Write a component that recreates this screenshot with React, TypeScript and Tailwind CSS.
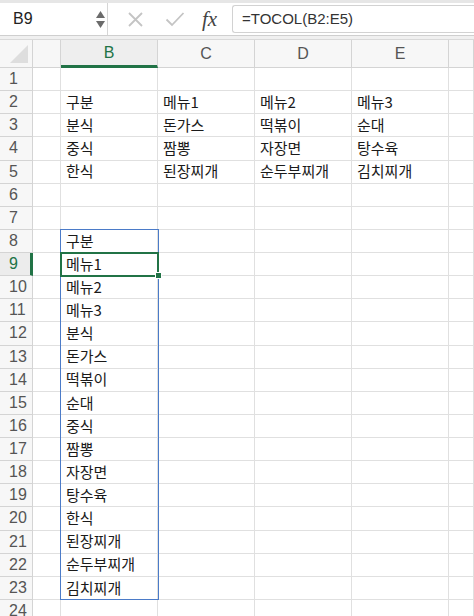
import React from "react";

const cols = ["A", "B", "C", "D", "E", "F"];
const colW = ["28px", "97px", "97px", "97px", "97px", "1fr"];

const data: Record<number, string[]> = {
  2: ["구분", "메뉴1", "메뉴2", "메뉴3"],
  3: ["분식", "돈가스", "떡볶이", "순대"],
  4: ["중식", "짬뽕", "자장면", "탕수육"],
  5: ["한식", "된장찌개", "순두부찌개", "김치찌개"],
};
const list = [
  "구분", "메뉴1", "메뉴2", "메뉴3", "분식", "돈가스", "떡볶이", "순대",
  "중식", "짬뽕", "자장면", "탕수육", "한식", "된장찌개", "순두부찌개", "김치찌개",
];

function cellText(r: number, c: number): string {
  if (data[r] && c >= 1 && c <= 4) return data[r][c - 1];
  if (r >= 8 && r <= 23 && c === 1) return list[r - 8];
  return "";
}

const ROW_H = 23.13;

export default function App() {
  const rows = Array.from({ length: 24 }, (_, i) => i + 1);
  return (
    <div className="w-[474px] h-[616px] overflow-hidden bg-white" style={{ fontFamily: '"Noto Sans CJK KR", "Noto Sans", sans-serif' }}>
      {/* top strip */}
      <div className="h-[3px] bg-[#e6e6e6]" />
      {/* toolbar */}
      <div className="h-[33px] flex items-stretch bg-white border-b border-[#cfcfcf]">
        <div className="w-[108px] flex items-center border-r border-[#d6d6d6] pl-[13px] pr-[2px]">
          <span className="flex-1 text-[16px] text-[#222]" style={{ fontFamily: '"Liberation Sans", Arial, sans-serif' }}>B9</span>
          <div className="flex flex-col items-center justify-center gap-[3px] w-[10px]">
            <svg width="9" height="7" viewBox="0 0 9 7"><path d="M4.5 0 L9 7 L0 7 Z" fill="#6b6b6b" /></svg>
            <svg width="9" height="7" viewBox="0 0 9 7"><path d="M0 0 L9 0 L4.5 7 Z" fill="#6b6b6b" /></svg>
          </div>
        </div>
        <div className="w-[124px] flex items-center pl-[19px]">
          <svg width="17" height="17" viewBox="0 0 17 17" className="mr-[21px]">
            <path d="M2 2 L15 15 M15 2 L2 15" stroke="#c4c4c4" strokeWidth="1.8" />
          </svg>
          <svg width="20" height="16" viewBox="0 0 20 16" className="mr-[17px]">
            <path d="M1.5 8.5 L7 14 L18.5 2" stroke="#c4c4c4" strokeWidth="1.8" fill="none" />
          </svg>
          <span className="text-[21px] italic text-[#444] leading-none" style={{ fontFamily: '"Liberation Serif", "Times New Roman", serif' }}>fx</span>
        </div>
        <div className="flex-1 flex items-center my-[2px] border-l border-y border-[#d2d2d2] rounded-l-[3px] pl-[9px]">
          <span className="text-[15px] text-[#333]" style={{ fontFamily: '"Liberation Sans", Arial, sans-serif' }}>=TOCOL(B2:E5)</span>
        </div>
      </div>
      {/* separator band */}
      <div className="h-[4px] bg-[#f0f0f0] border-b border-[#d9d9d9]" />
      {/* grid */}
      <div className="relative">
        <div
          className="grid"
          style={{ gridTemplateColumns: `33px ${colW.join(" ")}`, gridTemplateRows: `28px repeat(24, ${ROW_H}px)` }}
        >
          {/* corner */}
          <div className="bg-[#f7f7f7] border-r border-b border-[#d4d4d4] relative">
            <svg className="absolute right-[4px] bottom-[4px]" width="18" height="18" viewBox="0 0 18 18">
              <path d="M18 0 L18 18 L0 18 Z" fill="#dedede" />
            </svg>
          </div>
          {cols.map((c) => (
            <div
              key={c}
              className={
                "flex items-center justify-center border-r border-b text-[16px] " +
                (c === "B"
                  ? "bg-[#eeeeee] text-[#217346] border-b-[3px] border-b-[#217346] border-r-[#d4d4d4]"
                  : "bg-[#f7f7f7] text-[#555] border-[#d4d4d4]")
              }
              style={{ fontFamily: '"Liberation Sans", Arial, sans-serif', fontWeight: 300 }}
            >
              {c === "A" || c === "F" ? "" : c}
            </div>
          ))}
          {rows.map((r) => (
            <React.Fragment key={r}>
              <div
                className={
                  "flex items-center pl-[9px] border-r border-b text-[16px] " +
                  (r === 9
                    ? "bg-[#ececec] text-[#217346] border-b-[#d4d4d4] border-r-[3px] border-r-[#217346]"
                    : "bg-[#f7f7f7] text-[#555] border-[#d4d4d4]")
                }
                style={{ fontFamily: '"Liberation Sans", Arial, sans-serif' }}
              >
                {r}
              </div>
              {cols.map((c, ci) => (
                <div
                  key={c}
                  className="flex items-center pl-[5px] border-r border-b border-[#e0e0e0] text-[15px] text-[#1a1a1a] whitespace-nowrap overflow-visible"
                >
                  {cellText(r, ci)}
                </div>
              ))}
            </React.Fragment>
          ))}
        </div>
        {/* selection range B8:B23 */}
        <div
          className="absolute border-[1.5px] border-[#4b7bc8] pointer-events-none"
          style={{ left: 60, top: 28 + 7 * ROW_H - 1, width: 99, height: 16 * ROW_H + 1 }}
        />
        {/* active cell B9 */}
        <div
          className="absolute border-[2px] border-[#217346] pointer-events-none"
          style={{ left: 60, top: 28 + 8 * ROW_H - 1.5, width: 99, height: ROW_H + 2 }}
        />
        <div
          className="absolute bg-[#217346] border border-white pointer-events-none"
          style={{ left: 155, top: 28 + 9 * ROW_H - 4, width: 7, height: 7 }}
        />
      </div>
    </div>
  );
}
